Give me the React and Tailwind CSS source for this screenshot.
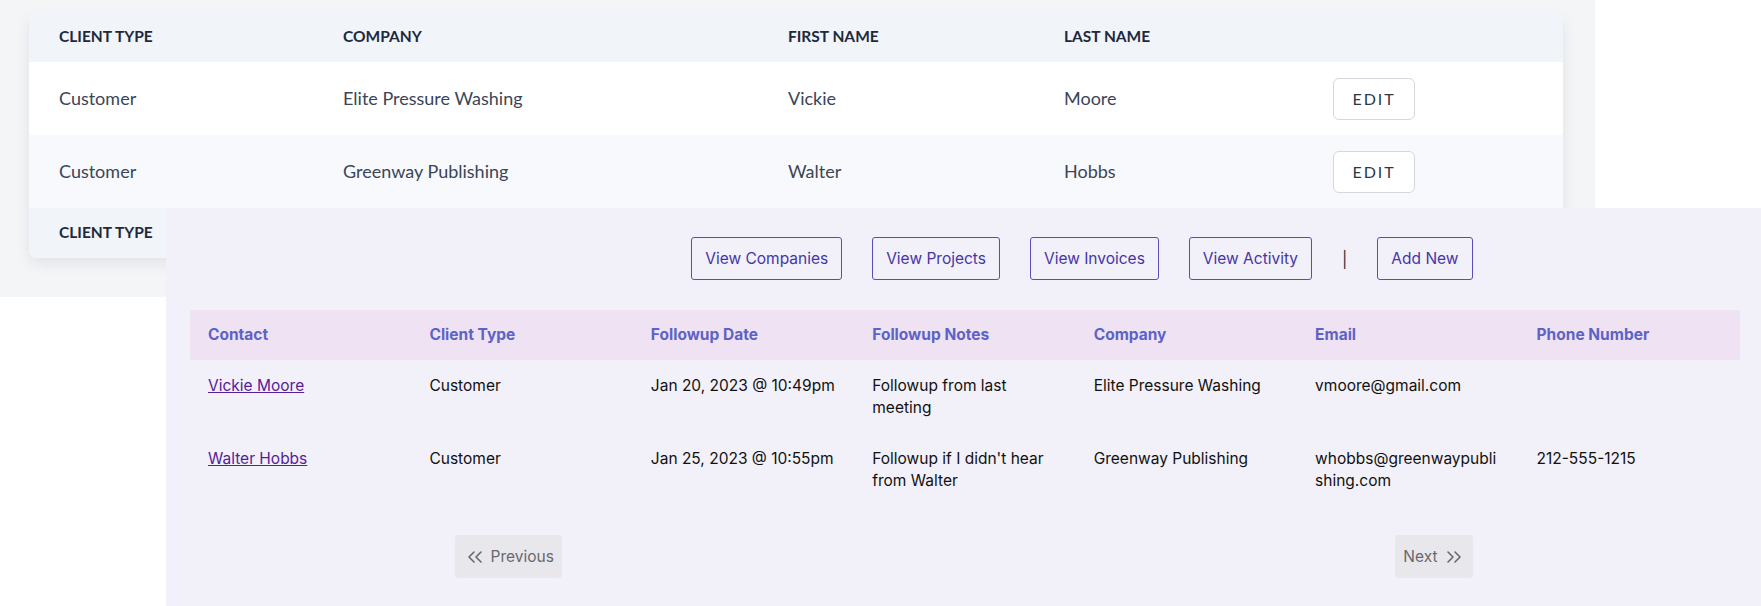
import React from "react";
import { ChevronsLeft, ChevronsRight } from "lucide-react";

const clients = [
  { type: "Customer", company: "Elite Pressure Washing", first: "Vickie", last: "Moore" },
  { type: "Customer", company: "Greenway Publishing", first: "Walter", last: "Hobbs" },
];

const followups = [
  {
    contact: "Vickie Moore",
    type: "Customer",
    date: "Jan 20, 2023 @ 10:49pm",
    notes: "Followup from last meeting",
    company: "Elite Pressure Washing",
    email: "vmoore@gmail.com",
    phone: "",
  },
  {
    contact: "Walter Hobbs",
    type: "Customer",
    date: "Jan 25, 2023 @ 10:55pm",
    notes: "Followup if I didn't hear from Walter",
    company: "Greenway Publishing",
    email: "whobbs@greenwaypublishing.com",
    phone: "212-555-1215",
  },
];

const headCols = ["Client Type", "Company", "First Name", "Last Name", ""];
const followCols = ["Contact", "Client Type", "Followup Date", "Followup Notes", "Company", "Email", "Phone Number"];
const navButtons = ["View Companies", "View Projects", "View Invoices", "View Activity"];

function ClientsCard() {
  return (
    <div className="w-[1534px] rounded-lg bg-white shadow-[0_6px_14px_rgba(15,23,42,0.08)] overflow-hidden font-['Lato',sans-serif]">
      <table className="w-full table-fixed border-collapse">
        <colgroup>
          <col className="w-[284px]" />
          <col className="w-[445px]" />
          <col className="w-[276px]" />
          <col className="w-[269px]" />
          <col />
        </colgroup>
        <thead className="bg-[#f1f4f8]">
          <tr className="h-[50px]">
            {headCols.map((c, i) => (
              <th key={i} className="px-[30px] text-left text-[15.5px] font-bold uppercase text-[#1e293b]">
                {c}
              </th>
            ))}
          </tr>
        </thead>
        <tbody>
          {clients.map((c, i) => (
            <tr key={i} className={`h-[73px] ${i % 2 === 1 ? "bg-[#f7f9fc]" : "bg-white"}`}>
              <td className="px-[30px] text-[18px] text-[#3b4557]">{c.type}</td>
              <td className="px-[30px] text-[18px] text-[#3b4557]">{c.company}</td>
              <td className="px-[30px] text-[18px] text-[#3b4557]">{c.first}</td>
              <td className="px-[30px] text-[18px] text-[#3b4557]">{c.last}</td>
              <td className="px-[30px]">
                <button className="w-[82px] h-[42px] rounded-md border border-[#d4d8df] bg-white text-[16px] tracking-[0.12em] text-[#2d3748]">
                  EDIT
                </button>
              </td>
            </tr>
          ))}
        </tbody>
        <tfoot className="bg-[#f1f4f8]">
          <tr className="h-[50px]">
            {headCols.map((c, i) => (
              <th key={i} className="px-[30px] text-left text-[15.5px] font-bold uppercase text-[#1e293b]">
                {c}
              </th>
            ))}
          </tr>
        </tfoot>
      </table>
    </div>
  );
}

function FollowupPanel() {
  return (
    <div className="relative -mt-[89px] ml-[166px] h-[398px] bg-[#f2f0f8] font-['Inter',sans-serif]">
      <div className="mx-auto w-[1018px] pt-[29px] flex items-center justify-end gap-[30px]">
        {navButtons.map((b) => (
          <button
            key={b}
            className="h-[43px] px-[13px] rounded-[3px] border-[1.5px] border-[#5a4cb6] text-[15.5px] text-[#4536a6]"
          >
            {b}
          </button>
        ))}
        <span className="text-[16px] text-[#333]">|</span>
        <button className="h-[43px] px-[13px] rounded-[3px] border-[1.5px] border-[#5a4cb6] text-[15.5px] text-[#4536a6]">
          Add New
        </button>
      </div>

      <table className="mt-[30px] ml-[24px] w-[1550px] table-fixed border-collapse">
        <thead>
          <tr className="h-[50px] bg-[#efe2f3]">
            {followCols.map((c) => (
              <th key={c} className="px-[18px] text-left text-[15.5px] font-bold text-[#5d63c6]">
                {c}
              </th>
            ))}
          </tr>
        </thead>
        <tbody>
          {followups.map((f) => (
            <tr key={f.contact} className="align-top text-[15.5px] leading-[22px] text-[#111]">
              <td className="px-[18px] pt-[15px] pb-[14px]">
                <a href="#" className="underline text-[#57209a]">
                  {f.contact}
                </a>
              </td>
              <td className="px-[18px] pt-[15px] pb-[14px]">{f.type}</td>
              <td className="px-[18px] pt-[15px] pb-[14px]">{f.date}</td>
              <td className="px-[18px] pt-[15px] pb-[14px]">{f.notes}</td>
              <td className="px-[18px] pt-[15px] pb-[14px]">{f.company}</td>
              <td className="px-[18px] pt-[15px] pb-[14px] [overflow-wrap:anywhere]">{f.email}</td>
              <td className="px-[18px] pt-[15px] pb-[14px]">{f.phone}</td>
            </tr>
          ))}
        </tbody>
      </table>

      <div className="mx-auto mt-[29px] w-[1018px] flex justify-between">
        <button className="h-[43px] pl-[8px] pr-[8px] flex items-center gap-[4px] rounded-[3px] bg-[#e8e7ec] text-[15.5px] text-[#68686d]">
          <ChevronsLeft size={24} strokeWidth={1.6} />
          Previous
        </button>
        <button className="h-[43px] pl-[8px] pr-[7px] flex items-center gap-[4px] rounded-[3px] bg-[#e8e7ec] text-[15.5px] text-[#68686d]">
          Next
          <ChevronsRight size={24} strokeWidth={1.6} />
        </button>
      </div>
    </div>
  );
}

export default function App() {
  return (
    <div className="w-[1761px] h-[606px] overflow-hidden bg-white">
      <div className="w-[1595px] h-[297px] bg-[#f4f5f7] pt-[12px] pl-[29px]">
        <ClientsCard />
      </div>
      <FollowupPanel />
    </div>
  );
}
